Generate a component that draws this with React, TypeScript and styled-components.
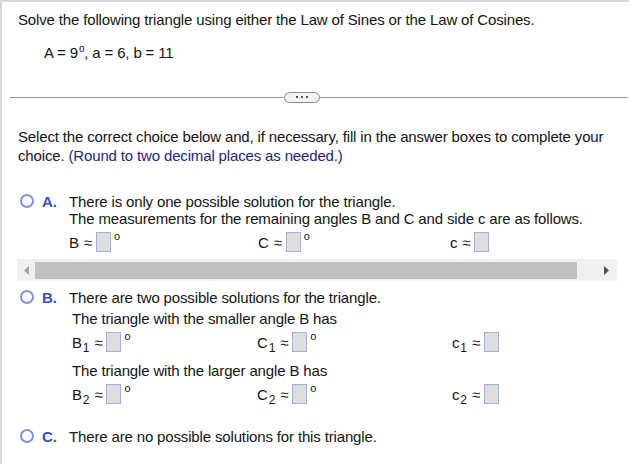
import React from 'react';
import styled, { createGlobalStyle } from 'styled-components';

const GlobalStyle = createGlobalStyle`
  html, body {
    margin: 0;
    padding: 0;
    background: #ffffff;
  }
  body {
    font-family: "Liberation Sans", Arial, sans-serif;
    color: #141414;
  }
`;

const Page = styled.div`
  width: 629px;
  height: 464px;
  box-sizing: border-box;
  border-left: 2px solid #d3d7e0;
  border-top: 2px solid #d3d7e0;
  overflow: hidden;
  font-size: 15px;
  line-height: 17px;
  letter-spacing: -0.15px;
`;

const Question = styled.div`
  padding: 9px 0 0 16px;
`;

const Given = styled.div`
  margin-top: 16px;
  padding-left: 42px;
`;

const DegreeMark = styled.span`
  font-size: 10px;
  position: relative;
  top: -6px;
  margin-left: 1px;
`;

const DividerRow = styled.div`
  display: flex;
  align-items: center;
  margin: 28px 1px 0 8px;
  height: 12px;
`;

const Rule = styled.div<{ $width?: number }>`
  flex: ${p => (p.$width ? `0 0 ${p.$width}px` : '1')};
  height: 1px;
  background: #8a94a2;
`;

const MoreButton = styled.div`
  width: 34px;
  height: 9px;
  border: 1px solid #7d8a9c;
  border-radius: 6px;
  background: #f1f3f6;
  display: flex;
  align-items: center;
  justify-content: center;
  gap: 3px;
`;

const Dot = styled.span`
  width: 2px;
  height: 2px;
  background: #4a5563;
`;

const Instructions = styled.div`
  margin-top: 24px;
  padding: 0 14px 0 16px;
  line-height: 19px;
`;

const InstructionLine = styled.div`
  white-space: nowrap;
`;

const Hint = styled.span`
  color: #25257c;
`;

const Choice = styled.div<{ $top: number }>`
  display: flex;
  margin-top: ${p => p.$top}px;
  padding-left: 18px;
`;

const Radio = styled.span`
  width: 10px;
  height: 10px;
  border: 2px solid #8191e2;
  border-radius: 50%;
  background: #fcfcff;
  margin-top: 1px;
  flex-shrink: 0;
`;

const Letter = styled.span`
  width: 27px;
  margin-left: 8px;
  font-weight: bold;
  color: #3a4dc2;
  flex-shrink: 0;
`;

const Body = styled.div`
  display: flex;
  flex-direction: column;
`;

const Line = styled.div<{ $indent?: number; $top?: number }>`
  padding-left: ${p => p.$indent ?? 0}px;
  margin-top: ${p => p.$top ?? 0}px;
  white-space: nowrap;
`;

const AnswerRow = styled.div<{ $indent?: number; $top?: number; $cols: string }>`
  display: grid;
  grid-template-columns: ${p => p.$cols};
  padding-left: ${p => p.$indent ?? 0}px;
  margin-top: ${p => p.$top ?? 0}px;
  align-items: start;
  height: 20px;
`;

const Field = styled.span`
  display: inline-flex;
  align-items: flex-start;
  white-space: nowrap;
`;

const Label = styled.span`
  display: inline-flex;
  align-items: baseline;
  padding-top: 2px;
  gap: 5px;
  margin-right: 4px;
`;

const Sub = styled.span`
  font-size: 12px;
  position: relative;
  top: 4px;
  margin-left: 1px;
`;

const Approx = styled.span`
  font-size: 15px;
  color: #2a2a2a;
`;

const Box = styled.span`
  display: inline-block;
  width: 13px;
  height: 18px;
  background: #dedede;
  border: 1px solid #9db2e6;
`;

const Degree = styled.span`
  font-size: 11px;
  line-height: 11px;
  margin-left: 3px;
  margin-top: -1px;
`;

const ScrollBar = styled.div`
  display: flex;
  align-items: center;
  height: 22px;
  margin: 7px 12px 0 15px;
  background: #f0f0f0;
`;

const ArrowCell = styled.div<{ $width: number; $end?: boolean }>`
  width: ${p => p.$width}px;
  display: flex;
  justify-content: ${p => (p.$end ? 'flex-end' : 'center')};
  padding-right: ${p => (p.$end ? 8 : 0)}px;
  box-sizing: border-box;
`;

const Thumb = styled.div`
  flex: 1;
  height: 17px;
  background: #c1c1c1;
`;

interface FieldProps {
  name: string;
  sub?: string;
  degree?: boolean;
}

const AnswerField: React.FC<FieldProps> = ({ name, sub, degree }) => (
  <Field>
    <Label>
      <span>
        {name}
        {sub && <Sub>{sub}</Sub>}
      </span>
      <Approx>≈</Approx>
    </Label>
    <Box />
    {degree && <Degree>o</Degree>}
  </Field>
);

export default function App() {
  return (
    <>
      <GlobalStyle />
      <Page>
        <Question>Solve the following triangle using either the Law of Sines or the Law of Cosines.</Question>
        <Given>
          A = 9<DegreeMark>o</DegreeMark>, a = 6, b = 11
        </Given>

        <DividerRow>
          <Rule $width={274} />
          <MoreButton>
            <Dot />
            <Dot />
            <Dot />
          </MoreButton>
          <Rule />
        </DividerRow>

        <Instructions>
          <InstructionLine>
            Select the correct choice below and, if necessary, fill in the answer boxes to complete your
          </InstructionLine>
          <InstructionLine>
            choice. <Hint>(Round to two decimal places as needed.)</Hint>
          </InstructionLine>
        </Instructions>

        <Choice $top={28}>
          <Radio />
          <Letter>A.</Letter>
          <Body>
            <Line>There is only one possible solution for the triangle.</Line>
            <Line>The measurements for the remaining angles B and C and side c are as follows.</Line>
            <AnswerRow $top={5} $cols="189px 192px auto">
              <AnswerField name="B" degree />
              <AnswerField name="C" degree />
              <AnswerField name="c" />
            </AnswerRow>
          </Body>
        </Choice>

        <ScrollBar>
          <ArrowCell $width={18}>
            <svg width="5" height="9" viewBox="0 0 5 9">
              <path d="M5 0 L0 4.5 L5 9 Z" fill="#a3a3a3" />
            </svg>
          </ArrowCell>
          <Thumb />
          <ArrowCell $width={40} $end>
            <svg width="5" height="9" viewBox="0 0 5 9">
              <path d="M0 0 L5 4.5 L0 9 Z" fill="#505050" />
            </svg>
          </ArrowCell>
        </ScrollBar>

        <Choice $top={8}>
          <Radio />
          <Letter>B.</Letter>
          <Body>
            <Line>There are two possible solutions for the triangle.</Line>
            <Line $indent={3} $top={4}>The triangle with the smaller angle B has</Line>
            <AnswerRow $indent={3} $top={5} $cols="185px 195px auto">
              <AnswerField name="B" sub="1" degree />
              <AnswerField name="C" sub="1" degree />
              <AnswerField name="c" sub="1" />
            </AnswerRow>
            <Line $indent={3} $top={10}>The triangle with the larger angle B has</Line>
            <AnswerRow $indent={3} $top={5} $cols="185px 195px auto">
              <AnswerField name="B" sub="2" degree />
              <AnswerField name="C" sub="2" degree />
              <AnswerField name="c" sub="2" />
            </AnswerRow>
          </Body>
        </Choice>

        <Choice $top={24}>
          <Radio />
          <Letter>C.</Letter>
          <Body>
            <Line>There are no possible solutions for this triangle.</Line>
          </Body>
        </Choice>
      </Page>
    </>
  );
}
